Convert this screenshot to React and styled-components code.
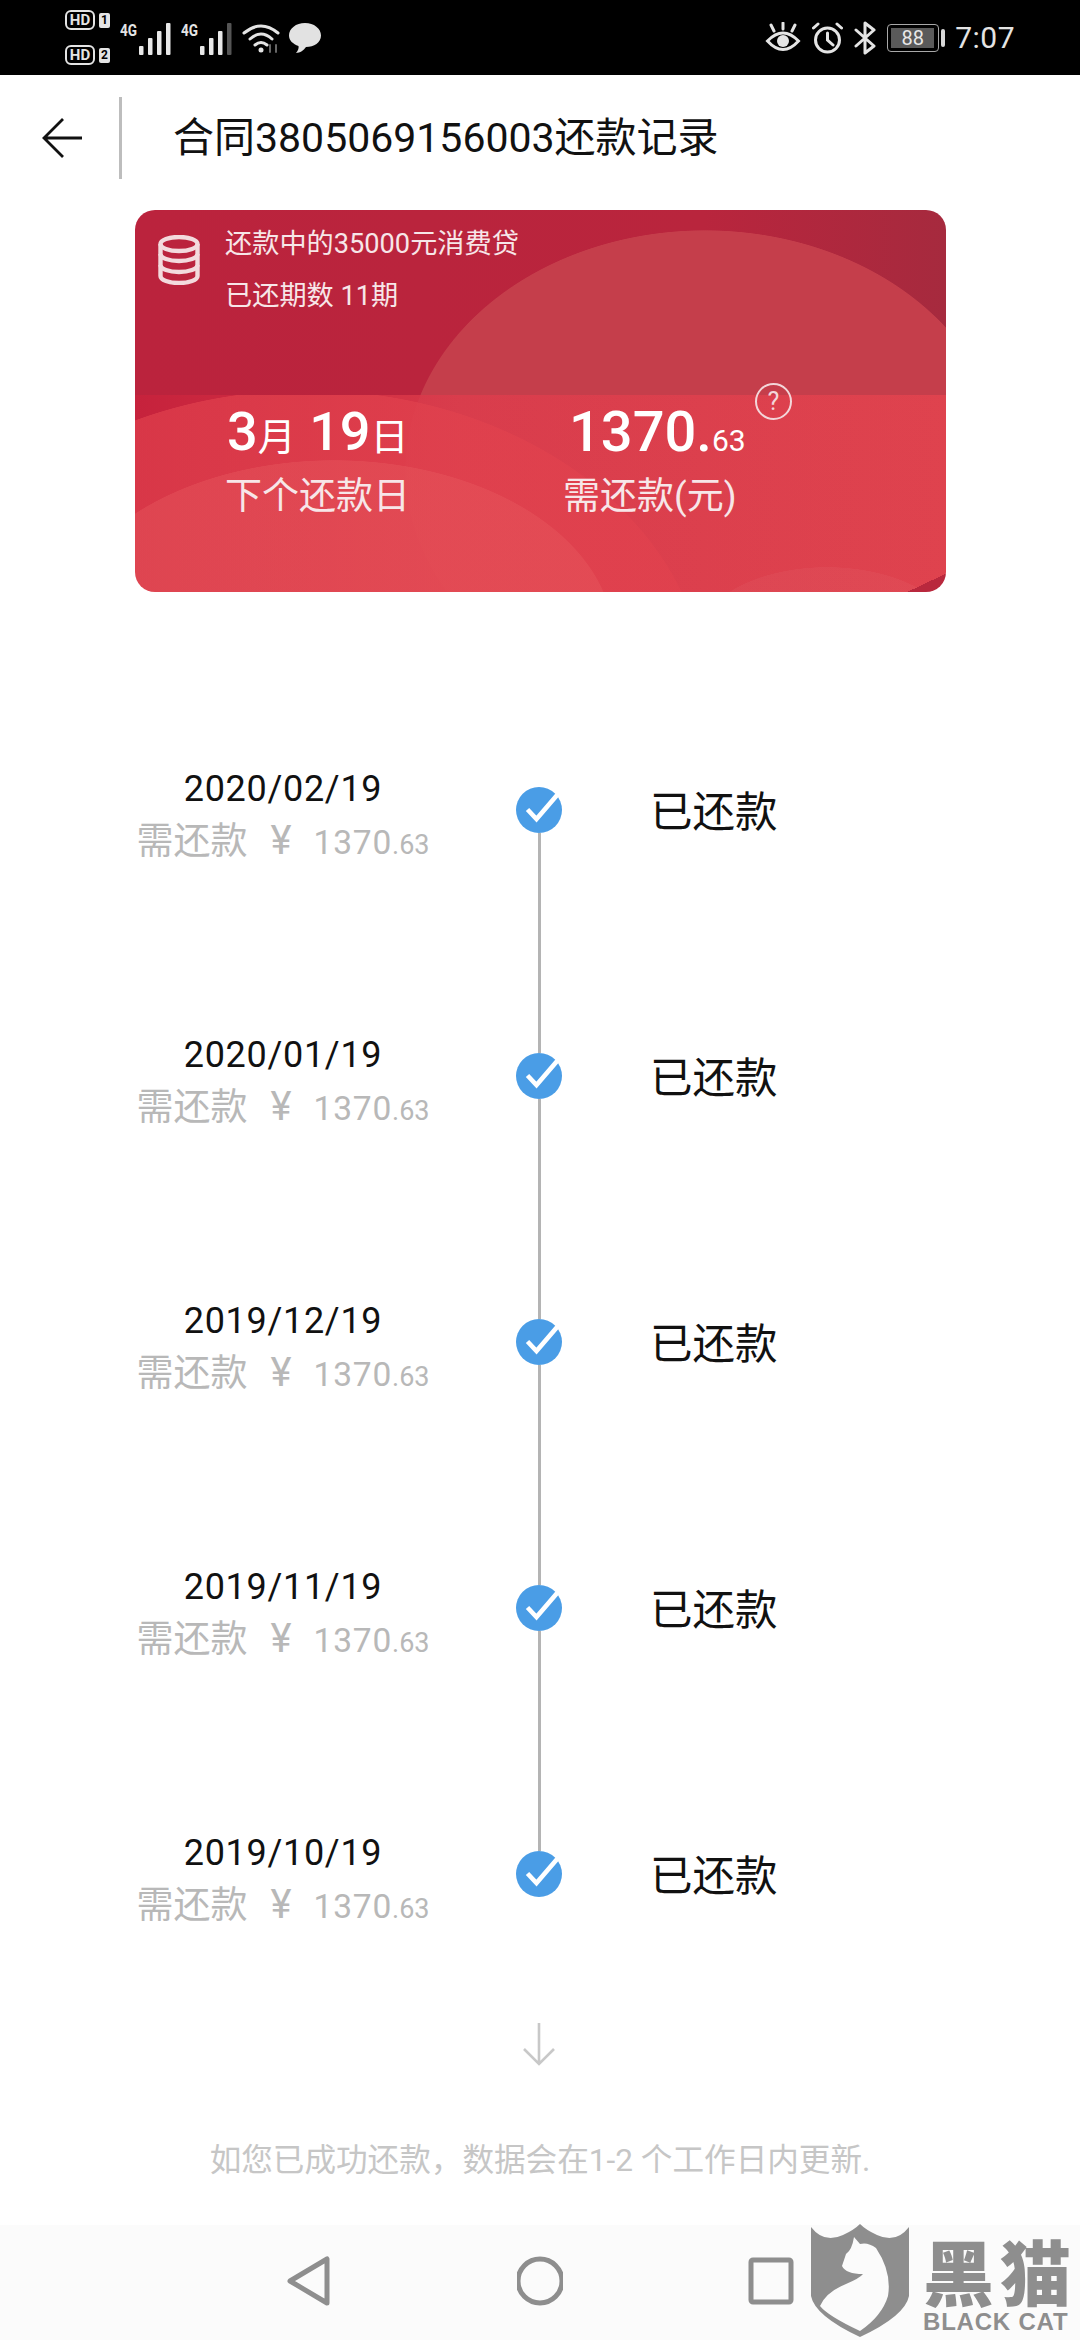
import React from "react";
import styled, { createGlobalStyle } from "styled-components";

const FONT = `Roboto, "Noto Sans CJK SC", sans-serif`;

const Global = createGlobalStyle`
  html, body { margin: 0; padding: 0; background: #fff; }
  body { font-family: ${FONT}; }
  * { box-sizing: border-box; }
`;

const Page = styled.div`
  width: 1080px;
  height: 2340px;
  position: relative;
  overflow: hidden;
  display: flex;
  flex-direction: column;
  background: #fff;
`;

/* status bar */
const StatusBar = styled.div`
  height: 75px;
  flex: none;
  background: #000;
  color: #e4e4e4;
  display: flex;
  align-items: center;
  justify-content: space-between;
  padding: 0 65px;
`;
const StatusGroup = styled.div`
  display: flex;
  align-items: center;
  gap: ${p => p.$gap || 9}px;
`;
const SimStack = styled.div`
  display: flex;
  flex-direction: column;
  gap: 15px;
  margin-right: 1px;
`;
const SimRow = styled.div`
  display: flex;
  align-items: center;
  gap: 4px;
`;
const HdBadge = styled.span`
  width: 30px;
  height: 20px;
  border: 2px solid #e4e4e4;
  border-radius: 6px;
  color: #e4e4e4;
  font: 700 15px/16px Roboto, sans-serif;
  text-align: center;
`;
const SimNo = styled.span`
  width: 11px;
  height: 15px;
  border-radius: 2px;
  background: #e4e4e4;
  color: #000;
  font: 700 12px/15px Roboto, sans-serif;
  text-align: center;
`;
const Signal = styled.div`
  display: flex;
  align-items: flex-start;
  margin-top: 2px;
`;
const NetLabel = styled.span`
  font: 700 16px/16px Roboto, sans-serif;
  transform: scaleX(0.85);
  transform-origin: left top;
  width: 18px;
`;
const Clock = styled.span`
  font: 400 30px/36px Roboto, sans-serif;
  color: #e4e4e4;
  margin-left: -1px;
  letter-spacing: 0.5px;
`;
const Battery = styled.div`
  width: 52px;
  height: 28px;
  border: 1.5px solid #a8a8a8;
  border-radius: 4px;
  padding: 3px;
  display: flex;
`;
const BatteryFill = styled.div`
  width: 43px;
  background: #5a5a5a;
  color: #e8e8e8;
  font: 400 20px/20px Roboto, sans-serif;
  text-align: center;
`;
const BatteryTip = styled.div`
  width: 4px;
  height: 18px;
  border-radius: 2px;
  background: #d8d8d8;
  margin-left: -2px;
`;

/* header */
const Header = styled.div`
  height: 125px;
  flex: none;
  display: flex;
  align-items: center;
  padding-left: 42px;
`;
const Divider = styled.div`
  width: 3px;
  height: 82px;
  background: #bdbdbd;
  margin: 0 51px 0 37px;
`;
const Title = styled.div`
  font-size: 41px;
  line-height: 60px;
  color: #111;
  white-space: nowrap;
`;

/* card */
const Card = styled.div`
  flex: none;
  width: 811px;
  height: 382px;
  margin: 10px 0 0 135px;
  border-radius: 20px;
  overflow: hidden;
  color: #f7e6e8;
  display: flex;
  flex-direction: column;
  background:
    linear-gradient(to bottom right, transparent 97.6%, #b9283d 97.6%),
    radial-gradient(ellipse 130px 73px at 692px 245px, rgba(255,255,255,.035) 99.5%, transparent 100%) 0 185px / 100% 197px no-repeat,
    radial-gradient(ellipse 280px 180px at 199px 245px, rgba(232,90,95,.4) 99.7%, transparent 100%) 0 185px / 100% 197px no-repeat,
    radial-gradient(ellipse 400px 310px at 172px 305px, rgba(226,66,78,.65) 99.8%, transparent 100%) 0 185px / 100% 197px no-repeat,
    radial-gradient(ellipse 300px 240px at 570px 75px, rgba(255,255,255,.025) 99.7%, transparent 100%) 0 185px / 100% 197px no-repeat,
    linear-gradient(90deg, #c6223c 0%, #d83848 40%, #de3e4a 100%) 0 185px / 100% 197px no-repeat,
    radial-gradient(ellipse 300px 240px at 570px 260px, #c53e4b 99.7%, transparent 100%),
    linear-gradient(90deg, #bb233d 0%, #b9253d 70%, #a62a3e 100%);
`;
const CardTop = styled.div`
  flex: none;
  height: 185px;
  display: flex;
  padding: 25px 0 0 23px;
`;
const CoinIcon = styled.svg`
  width: 42px;
  height: 50px;
  flex: none;
`;
const CardInfo = styled.div`
  margin-left: 25px;
  margin-top: -11px;
  display: flex;
  flex-direction: column;
  gap: 12px;
`;
const CardLine = styled.div`
  font-size: 27.2px;
  line-height: 40px;
  white-space: nowrap;
`;
const CardStats = styled.div`
  display: grid;
  grid-template-columns: 338px 1fr;
  padding-left: 90px;
`;
const Stat = styled.div`
  display: flex;
  flex-direction: column;
  position: relative;
`;
const StatValue = styled.div`
  font-size: ${p => p.$size || 54}px;
  line-height: 70px;
  height: 70px;
  margin: 2px 0 0 ${p => p.$offset || 0}px;
  color: #fff;
  white-space: nowrap;
  font-weight: 500;
`;
const Small = styled.span`
  font-size: ${p => p.$size || 38}px;
  font-weight: 400;
`;
const StatLabel = styled.div`
  font-size: 37px;
  line-height: 50px;
  margin-top: 5px;
  white-space: nowrap;
`;
const Help = styled.span`
  position: absolute;
  left: 192px;
  top: -12px;
  width: 37px;
  height: 37px;
  border: 2px solid #f3d6d9;
  border-radius: 50%;
  font-size: 25px;
  line-height: 33px;
  text-align: center;
  color: #f3d6d9;
`;

/* timeline */
const Timeline = styled.div`
  margin-top: 195px;
  display: flex;
  flex-direction: column;
`;
const Row = styled.div`
  display: grid;
  grid-template-columns: 296px 46px 1fr;
  height: ${p => (p.$last ? 140 : 266)}px;
  padding-left: 135px;
`;
const Left = styled.div`
  margin-top: -23px;
  display: flex;
  flex-direction: column;
  align-items: center;
`;
const DateText = styled.div`
  font-size: 36px;
  line-height: 50px;
  letter-spacing: 0.7px;
  color: #111;
`;
const Due = styled.div`
  display: flex;
  align-items: baseline;
  margin-top: 2px;
  line-height: 50px;
  color: #b8b8b8;
  white-space: nowrap;
`;
const DueLabel = styled.span`
  font-size: 37px;
`;
const DueCurrency = styled.span`
  font-size: 40px;
  margin: 0 22px 0 23px;
`;
const DueAmount = styled.span`
  font-size: 33.5px;
  letter-spacing: 0.8px;
`;
const DueCents = styled.span`
  font-size: 27px;
`;
const Node = styled.div`
  grid-column: 2;
  margin-left: 85px;
  width: 46px;
  display: flex;
  flex-direction: column;
  align-items: center;
`;
const Line = styled.div`
  flex: 1;
  width: 3px;
  background: #b4b4b4;
`;
const Status = styled.div`
  margin: 2px 0 0 173px;
  font-size: 42.5px;
  line-height: 48px;
  color: #111;
  white-space: nowrap;
`;
const Check = styled.svg`
  width: 46px;
  height: 46px;
  flex: none;
  display: block;
`;

const DownArrow = styled.svg`
  flex: none;
  display: block;
  width: 34px;
  height: 44px;
  margin: 32px 0 0 522px;
`;
const Note = styled.div`
  margin-top: 74px;
  text-align: center;
  font-size: 31.6px;
  line-height: 40px;
  color: #c6c6c6;
  white-space: nowrap;
`;

/* nav */
const NavBar = styled.div`
  margin-top: auto;
  height: 115px;
  flex: none;
  background: #fbfbfb;
  display: flex;
  align-items: flex-start;
  padding: 31px 0 0 286px;
  gap: 185px;
`;
const NavIcon = styled.svg`
  width: 46px;
  height: 50px;
  display: block;
  flex: none;
`;
const Watermark = styled.div`
  position: absolute;
  right: 0;
  bottom: 0;
  width: 270px;
  height: 116px;
  display: flex;
  color: #8e8e8e;
`;
const Shield = styled.svg`
  width: 100px;
  height: 114px;
  flex: none;
`;
const Brand = styled.div`
  margin-left: 13px;
  display: flex;
  flex-direction: column;
`;
const BrandCn = styled.div`
  font: 900 71px/72px "Noto Sans CJK SC", sans-serif;
  letter-spacing: 6px;
  height: 76px;
  margin-top: 9px;
  white-space: nowrap;
`;
const BrandEn = styled.div`
  font: 700 24px/26px "Liberation Sans", sans-serif;
  letter-spacing: 0.8px;
  white-space: nowrap;
`;

const Bars = ({ level }) => (
  <svg width="34" height="32" viewBox="0 0 34 32">
    {[[1, 23, 9], [10, 15, 17], [19, 8, 24], [28, 0, 32]].map(([x, y, h], i) => (
      <rect key={i} x={x} y={y} width="4.5" height={h} rx="1" fill={i < level ? "#e8e8e8" : "#555"} />
    ))}
  </svg>
);

const CheckDot = () => (
  <Check viewBox="0 0 46 46">
    <circle cx="23" cy="23" r="23" fill="#4a9de6" />
    <path d="M11.5 22.5 L20.5 32 L42 7" fill="none" stroke="#fff" strokeWidth="4.6" />
  </Check>
);

const rows = ["2020/02/19", "2020/01/19", "2019/12/19", "2019/11/19", "2019/10/19"];

export default function App() {
  return (
    <Page>
      <Global />
      <StatusBar>
        <StatusGroup>
          <SimStack>
            <SimRow><HdBadge>HD</HdBadge><SimNo>1</SimNo></SimRow>
            <SimRow><HdBadge>HD</HdBadge><SimNo>2</SimNo></SimRow>
          </SimStack>
          <Signal><NetLabel>4G</NetLabel><Bars level={4} /></Signal>
          <Signal><NetLabel>4G</NetLabel><Bars level={3} /></Signal>
          <svg width="38" height="32" viewBox="0 0 38 32" fill="none" stroke="#e4e4e4" strokeWidth="3" strokeLinecap="round">
            <path d="M2 11 Q19 -3 36 11" />
            <path d="M8 17 Q19 7 30 17" />
            <path d="M13 23 Q19 18 25 23" />
            <circle cx="19" cy="28" r="2.5" fill="#e4e4e4" stroke="none" />
            <path d="M28 23 v7 M34 23 v7" stroke="#666" strokeWidth="2" />
          </svg>
          <svg width="32" height="32" viewBox="0 0 32 32">
            <path d="M16 1 C25 1 32 6.5 32 13.5 C32 20.5 25 25 17 25 C15 28 11 31 7 31 C9 29 10 26 9.5 24 C4 22 0 18.5 0 13.5 C0 6.5 7 1 16 1 Z" fill="#e2e2e2" />
          </svg>
        </StatusGroup>
        <StatusGroup $gap={11}>
          <svg width="36" height="32" viewBox="0 0 34 32" fill="none" stroke="#e4e4e4" strokeWidth="3" strokeLinecap="round">
            <path d="M1.5 19 Q17 3 32.5 19 Q17 36 1.5 19 Z" />
            <circle cx="17" cy="19" r="6" fill="#e4e4e4" stroke="none" />
            <path d="M17 1 v6 M5 3 l3 6 M29 3 l-3 6" />
          </svg>
          <svg width="31" height="32" viewBox="0 0 31 32" fill="none" stroke="#e4e4e4" strokeWidth="3" strokeLinecap="round">
            <circle cx="15.5" cy="18" r="12" />
            <path d="M15.5 11 V18 L21 23 M1.5 6 L6 2 M29.5 6 L25 2" />
          </svg>
          <svg width="22" height="34" viewBox="0 0 22 34" fill="none" stroke="#e4e4e4" strokeWidth="3" strokeLinecap="round" strokeLinejoin="round">
            <path d="M2 9 L20 25 L11 32 V2 L20 9 L2 25" />
          </svg>
          <SimRow>
            <Battery><BatteryFill>88</BatteryFill></Battery>
            <BatteryTip />
          </SimRow>
          <Clock>7:07</Clock>
        </StatusGroup>
      </StatusBar>

      <Header>
        <svg width="40" height="42" viewBox="0 0 40 42" fill="none" stroke="#111" strokeWidth="2.8">
          <path d="M40 21 H2 M21 2 L2 21 L21 40" />
        </svg>
        <Divider />
        <Title>合同3805069156003还款记录</Title>
      </Header>

      <Card>
        <CardTop>
          <CoinIcon viewBox="0 0 42 50" fill="none" stroke="#f3dadd" strokeWidth="4.4">
            <ellipse cx="21" cy="9" rx="18.5" ry="7" />
            <path d="M2.5 9 V41 C2.5 45 11 48 21 48 C31 48 39.5 45 39.5 41 V9" />
            <path d="M2.5 19 C2.5 23 11 26 21 26 C31 26 39.5 23 39.5 19" />
            <path d="M2.5 30 C2.5 34 11 37 21 37 C31 37 39.5 34 39.5 30" />
          </CoinIcon>
          <CardInfo>
            <CardLine>还款中的35000元消费贷</CardLine>
            <CardLine>已还期数 11期</CardLine>
          </CardInfo>
        </CardTop>
        <CardStats>
          <Stat>
            <StatValue $offset={2}>3<Small>月</Small> 19<Small>日</Small></StatValue>
            <StatLabel>下个还款日</StatLabel>
          </Stat>
          <Stat>
            <StatValue $size={56} $offset={6}>1370.<Small $size={30}>63</Small></StatValue>
            <StatLabel>需还款(元)</StatLabel>
            <Help>?</Help>
          </Stat>
        </CardStats>
      </Card>

      <Timeline>
        {rows.map((d, i) => {
          const last = i === rows.length - 1;
          return (
            <Row key={d} $last={last}>
              <Left>
                <DateText>{d}</DateText>
                <Due>
                  <DueLabel>需还款</DueLabel>
                  <DueCurrency>¥</DueCurrency>
                  <DueAmount>1370</DueAmount>
                  <DueCents>.63</DueCents>
                </Due>
              </Left>
              <Node>
                <CheckDot />
                {!last && <Line />}
              </Node>
              <Status>已还款</Status>
            </Row>
          );
        })}
      </Timeline>

      <DownArrow viewBox="0 0 34 44" fill="none" stroke="#c8c8c8" strokeWidth="2.6">
        <path d="M17 0 V41 M2 26 L17 41 L32 26" />
      </DownArrow>
      <Note>如您已成功还款，数据会在1-2 个工作日内更新.</Note>

      <NavBar>
        <NavIcon viewBox="0 0 46 50" fill="none" stroke="#8e8e8e" strokeWidth="5" strokeLinejoin="round">
          <path d="M41 3 V47 L4 25 Z" />
        </NavIcon>
        <NavIcon viewBox="0 0 46 50" fill="none" stroke="#8e8e8e" strokeWidth="5">
          <circle cx="23" cy="25" r="22" />
        </NavIcon>
        <NavIcon viewBox="0 0 46 50" fill="none" stroke="#8e8e8e" strokeWidth="5" strokeLinejoin="round">
          <rect x="3" y="4" width="40" height="42" rx="2" />
        </NavIcon>
      </NavBar>

      <Watermark>
        <Shield viewBox="0 0 100 114">
          <path d="M1 3 Q14 20 33 11 Q44 6 50 0 Q56 6 67 11 Q86 20 99 3 V72 Q95 92 50 113 Q5 92 1 72 Z" fill="#8e8e8e" />
          <path d="M44 13 L50 20 Q58 18 66 24 Q82 48 78 72 Q72 92 50 107 Q18 92 10 82 Q16 68 36 60 Q50 54 53 50 Q36 50 32 42 Q34 36 36 30 Q42 26 44 13 Z" fill="#fbfbfb" />
        </Shield>
        <Brand>
          <BrandCn>黑猫</BrandCn>
          <BrandEn>BLACK CAT</BrandEn>
        </Brand>
      </Watermark>
    </Page>
  );
}
